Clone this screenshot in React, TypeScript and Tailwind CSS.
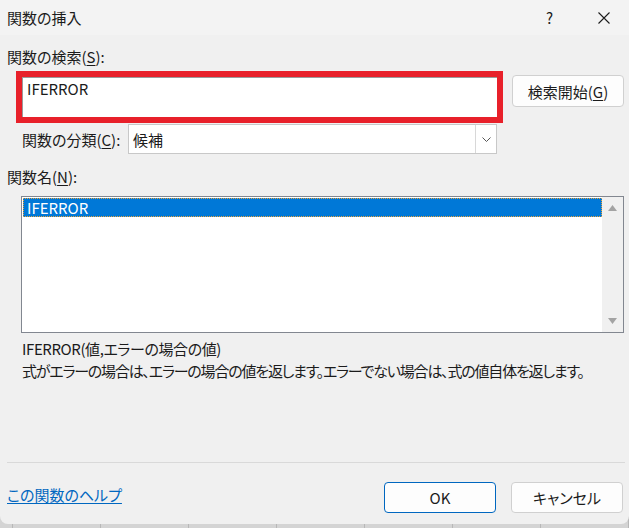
import React from 'react';

const font = 'font-["Noto_Sans_CJK_JP","Noto_Sans",sans-serif] [font-feature-settings:"palt"]';

function AccessKey({ k }: { k: string }) {
  return <span className="underline underline-offset-2">{k}</span>;
}

export default function App() {
  const gridCells = Array.from({ length: 8 });

  return (
    <div className={`w-[629px] h-[528px] overflow-hidden bg-[#d4d4d4] text-[15px] text-[#1b1b1b] ${font}`}>
      {/* Dialog */}
      <div className="h-[524px] bg-[#f0f0f0] rounded-b-[8px] flex flex-col relative z-10">
        {/* Title bar */}
        <div className="h-[35px] bg-[#f3f3f3] flex items-center pl-[7px] shrink-0">
          <span className="leading-none">関数の挿入</span>
          <span className="ml-auto mr-[45px] leading-none">?</span>
          <div className="w-[12px] h-[12px] mr-[19px]">
            <svg viewBox="0 0 12 12" width="12" height="12">
              <path d="M0.5 0.5 L11.5 11.5 M11.5 0.5 L0.5 11.5" stroke="#1b1b1b" strokeWidth="1.1" fill="none" />
            </svg>
          </div>
        </div>

        <div className="px-[7px] flex flex-col flex-1">
          {/* Search label */}
          <div className="mt-[12px] h-[20px] leading-[20px]">
            関数の検索(<AccessKey k="S" />):
          </div>

          {/* Search row */}
          <div className="mt-[4px] flex items-start">
            <div className="ml-[9px] w-[487px] h-[52px] shrink-0 border-[6px] border-[#e8202a] bg-white">
              <div className="h-full border border-[#9a9a9a] border-b-0 border-r-0 pl-[4px] leading-[20px] pt-[1px]">IFERROR</div>
            </div>
            <button className="ml-[9px] mt-[4px] w-[112px] h-[32px] shrink-0 rounded-[4px] border border-[#d0d0d0] bg-[#fdfdfd] leading-none">
              検索開始(<AccessKey k="G" />)
            </button>
          </div>

          {/* Category row */}
          <div className="mt-[1px] h-[30px] flex items-center">
            <span className="ml-[15px] w-[106px] leading-none">
              関数の分類(<AccessKey k="C" />):
            </span>
            <div className="w-[369px] h-[30px] bg-white border border-[#c8c8c8] flex items-center">
              <span className="pl-[4px] leading-none flex-1">候補</span>
              <div className="w-[21px] h-full border-l border-[#d8d8d8] flex items-center justify-center">
                <svg viewBox="0 0 9 5" width="9" height="5">
                  <path d="M0.5 0.5 L4.5 4.5 L8.5 0.5" stroke="#555" strokeWidth="1" fill="none" />
                </svg>
              </div>
            </div>
          </div>

          {/* Function name label */}
          <div className="mt-[13px] h-[20px] leading-[20px]">
            関数名(<AccessKey k="N" />):
          </div>

          {/* List box */}
          <div className="mt-[9px] ml-[14px] w-[603px] h-[137px] border border-[#828790] bg-white flex">
            <div className="w-[580px] shrink-0 pt-[1px] pl-[1px]">
              <div className="h-[19px] bg-[#0078d7] text-white leading-[19px] pl-[4px] outline-1 outline-dotted outline-[#e8a33c] -outline-offset-1">
                IFERROR
              </div>
            </div>
            <div className="w-[21px] shrink-0 bg-[#f0f0f0] flex flex-col items-center justify-between py-[8px]">
              <svg viewBox="0 0 9 6" width="9" height="6">
                <path d="M0 6 L4.5 0 L9 6 Z" fill="#a3a3a3" />
              </svg>
              <svg viewBox="0 0 9 6" width="9" height="6">
                <path d="M0 0 L4.5 6 L9 0 Z" fill="#a3a3a3" />
              </svg>
            </div>
          </div>

          {/* Syntax and description */}
          <div className="mt-[6px] ml-[15px] h-[20px] leading-[20px] tracking-[-0.4px]">IFERROR(値,エラーの場合の値)</div>
          <div className="mt-[2px] ml-[15px] h-[20px] leading-[20px] whitespace-nowrap tracking-[-1.2px]">
            式がエラーの場合は、エラーの場合の値を返します。エラーでない場合は、式の値自体を返します。
          </div>

          {/* Separator */}
          <div className="mt-[81px] w-[618px] h-px bg-[#d9d9d9]" />

          {/* Footer */}
          <div className="mt-[19px] flex items-start">
            <a className="mt-[3px] leading-[20px] text-[#0067c0] underline underline-offset-2 cursor-pointer">
              この関数のヘルプ
            </a>
            <button className="ml-auto w-[112px] h-[31px] rounded-[4px] border border-[#0067c0] bg-[#fdfdfd] leading-none">
              OK
            </button>
            <button className="ml-[15px] mr-[-1px] w-[112px] h-[31px] rounded-[4px] border border-[#d0d0d0] bg-[#fdfdfd] leading-none">
              キャンセル
            </button>
          </div>
        </div>
      </div>

      {/* Sheet grid peeking below the dialog */}
      <div className="flex h-[12px] -mt-[8px] bg-[#d4d4d4] pl-[12px]">
        {gridCells.map((_, i) => (
          <div key={i} className="w-[88px] shrink-0 border-l border-[#b8b8b8]" />
        ))}
      </div>
    </div>
  );
}
